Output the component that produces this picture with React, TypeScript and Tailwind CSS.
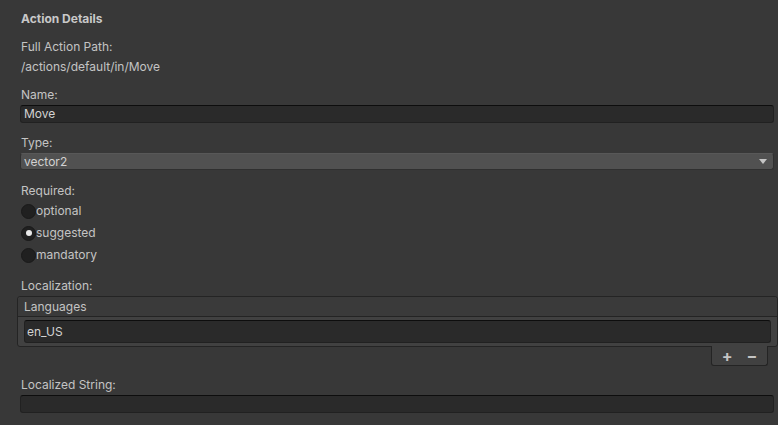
import React from "react";

function Label({ children, className = "" }: { children: React.ReactNode; className?: string }) {
    return <div className={`h-4 leading-4 pl-px text-[12px] text-[#c4c4c4] ${className}`}>{children}</div>;
}

function TextField({ value, className = "" }: { value?: string; className?: string }) {
    return (
        <div className={`h-[18px] mr-[4px] rounded-[3px] bg-[#2a2a2a] border border-[#212121] border-t-[#0d0d0d] px-[3px] leading-[16px] text-[12px] text-[#d2d2d2] ${className}`}>
            {value}
        </div>
    );
}

function Radio({ label, checked }: { label: string; checked?: boolean }) {
    return (
        <div className="h-[22px] flex items-center">
            <div className="ml-[1px] w-[15px] h-[15px] rounded-full bg-[#202020] border border-[#191919] flex items-center justify-center">
                {checked && <div className="w-[6px] h-[6px] rounded-full bg-[#e8e8e8]" />}
            </div>
            <span className="text-[12px] text-[#c4c4c4] leading-4">{label}</span>
        </div>
    );
}

export default function App() {
    return (
        <div
            className="w-[778px] h-[425px] bg-[#383838] overflow-hidden flex flex-col pl-[20px] pt-[11px]"
            style={{ fontFamily: "Inter, 'Noto Sans', sans-serif" }}
        >
            {/* Header */}
            <Label className="font-bold text-[#c8c8c8]">Action Details</Label>

            <Label className="mt-[12px]">Full Action Path:</Label>
            <Label className="mt-[4px]">/actions/default/in/Move</Label>

            <Label className="mt-[12px]">Name:</Label>
            <TextField value="Move" className="mt-[2px]" />

            <Label className="mt-[12px]">Type:</Label>
            <div className="mt-[2px] h-[17px] mr-[4px] rounded-[3px] bg-[#515151] border border-[#303030] border-t-[#585858] px-[3px] flex items-center justify-between">
                <span className="text-[12px] text-[#d2d2d2] leading-4">vector2</span>
                <svg width="8" height="5" viewBox="0 0 8 5" className="mr-[3px]">
                    <path d="M0 0 H8 L4 5 Z" fill="#c4c4c4" />
                </svg>
            </div>

            <Label className="mt-[13px]">Required:</Label>
            <div className="mt-[1px] flex flex-col">
                <Radio label="optional" />
                <Radio label="suggested" checked />
                <Radio label="mandatory" />
            </div>

            <Label className="mt-[12px]">Localization:</Label>
            {/* Languages list */}
            <div className="mt-[2px] -ml-[3px] flex flex-col">
                <div className="rounded-[3px] border border-[#242424] bg-[#414141] flex flex-col">
                    <div className="h-[20px] bg-[#3a3a3a] border-b border-[#242424] rounded-t-[3px] px-[6px] leading-[19px] text-[12px] text-[#c4c4c4]">
                        Languages
                    </div>
                    <div className="px-[6px] pt-[3px] pb-[3px]">
                        <div className="h-[23px] rounded-[3px] bg-[#2a2a2a] border border-[#212121] border-t-[#0d0d0d] px-[2px] leading-[21px] text-[12px] text-[#d2d2d2]">
                            en_US
                        </div>
                    </div>
                </div>
                <div className="self-end mr-[10px] -mt-px w-[57px] h-[20px] bg-[#414141] border border-[#242424] border-t-0 rounded-b-[3px] flex items-center justify-center gap-[14px]">
                    <span className="text-[16px] font-bold leading-4 text-[#c4c4c4]">+</span>
                    <span className="text-[16px] font-bold leading-4 text-[#c4c4c4]">−</span>
                </div>
            </div>

            <Label className="mt-[11px]">Localized String:</Label>
            <TextField className="mt-[2px]" />
        </div>
    );
}
